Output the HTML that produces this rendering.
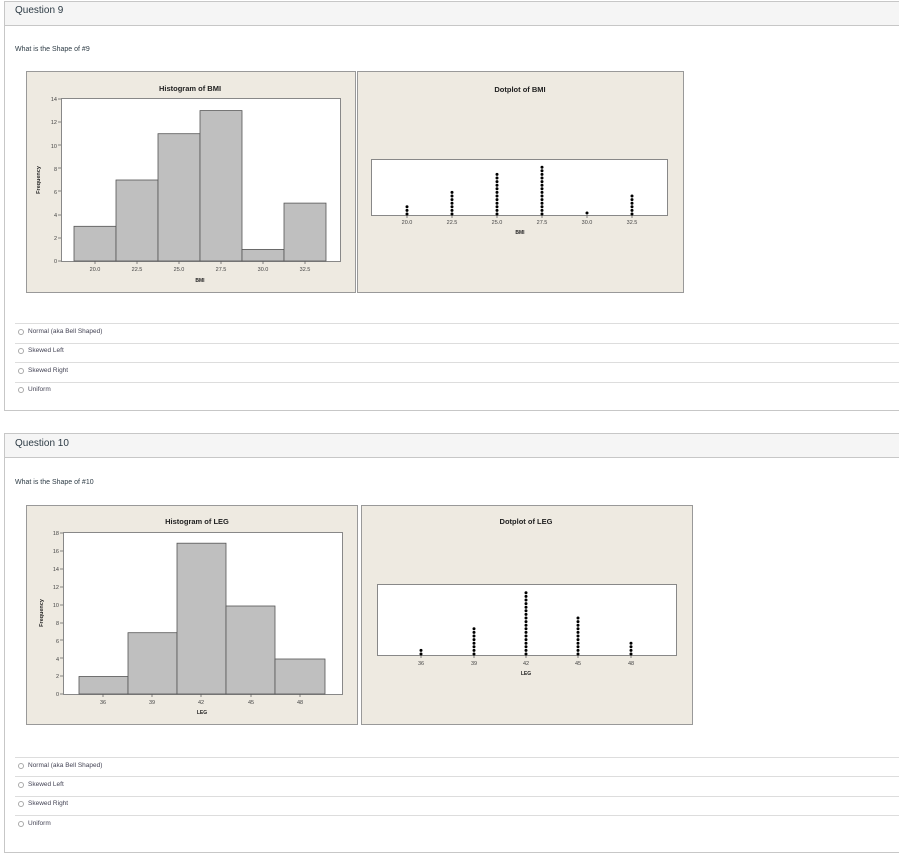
<!DOCTYPE html>
<html><head><meta charset="utf-8"><style>
body{margin:0;width:899px;height:842px;background:#fff;font-family:"Liberation Sans",sans-serif;position:relative;overflow:hidden}
.box{position:absolute;left:4px;width:900px;border:1px solid #c7c7c7;box-sizing:border-box}
.hd{position:absolute;left:0;right:0;top:0;height:23px;background:#f5f5f5;border-bottom:1px solid #c7c7c7}
.t{position:absolute;font-size:9px;color:#2d3b45;white-space:nowrap}
.q{font-size:10px;color:#2d3b45}
.l{position:absolute;left:15px;width:890px;height:1px;background:#ddd}
.r{position:absolute;width:6px;height:6px;border:1px solid #aaa;border-radius:50%;box-sizing:border-box}
.o{position:absolute;font-size:6.5px;color:#445}
</style></head><body>
<div class="box" style="top:1px;height:410px"><div class="hd"></div></div>
<div class="box" style="top:433px;height:420px"><div class="hd"></div></div>
<div class="t q" style="left:15px;top:5px">Question 9</div>
<div class="t" style="left:15px;top:46px;font-size:7px">What is the Shape of #9</div>
<div class="t q" style="left:15px;top:438px">Question 10</div>
<div class="t" style="left:15px;top:479px;font-size:7px">What is the Shape of #10</div>

<div class="l" style="top:323px"></div><div class="l" style="top:343px"></div><div class="l" style="top:362px"></div><div class="l" style="top:382px"></div>
<div class="r" style="left:18px;top:329px"></div><div class="o" style="left:28px;top:328px">Normal (aka Bell Shaped)</div>
<div class="r" style="left:18px;top:348px"></div><div class="o" style="left:28px;top:347px">Skewed Left</div>
<div class="r" style="left:18px;top:368px"></div><div class="o" style="left:28px;top:367px">Skewed Right</div>
<div class="r" style="left:18px;top:387px"></div><div class="o" style="left:28px;top:386px">Uniform</div>

<div class="l" style="top:757px"></div><div class="l" style="top:776px"></div><div class="l" style="top:796px"></div><div class="l" style="top:815px"></div>
<div class="r" style="left:18px;top:763px"></div><div class="o" style="left:28px;top:762px">Normal (aka Bell Shaped)</div>
<div class="r" style="left:18px;top:782px"></div><div class="o" style="left:28px;top:781px">Skewed Left</div>
<div class="r" style="left:18px;top:801px"></div><div class="o" style="left:28px;top:800px">Skewed Right</div>
<div class="r" style="left:18px;top:821px"></div><div class="o" style="left:28px;top:820px">Uniform</div>

<svg style="position:absolute;left:0;top:0" width="899" height="842" font-family="Liberation Sans, sans-serif">
<g stroke="#999" fill="#eeeae1">
<rect x="26.5" y="71.5" width="329" height="221"/>
<rect x="357.5" y="71.5" width="326" height="221"/>
<rect x="26.5" y="505.5" width="331" height="219"/>
<rect x="361.5" y="505.5" width="331" height="219"/>
</g>
<g stroke="#888" fill="#fff">
<rect x="61.5" y="98.5" width="279" height="163"/>
<rect x="371.5" y="159.5" width="296" height="56"/>
<rect x="63.5" y="532.5" width="279" height="162"/>
<rect x="377.5" y="584.5" width="299" height="71"/>
</g>
<g stroke="#666" stroke-width="0.8">
<path d="M58 99h3M58 122h3M58 145h3M58 168h3M58 191h3M58 215h3M58 238h3M58 261h3M95 261v3M137 261v3M179 261v3M221 261v3M263 261v3M305 261v3M407 215v3M452 215v3M497 215v3M542 215v3M587 215v3M632 215v3"/>
<path d="M60 533h3M60 551h3M60 569h3M60 587h3M60 605h3M60 623h3M60 640h3M60 658h3M60 676h3M60 694h3M103 694v3M152 694v3M201 694v3M251 694v3M300 694v3M421 655v3M474 655v3M526 655v3M578 655v3M631 655v3"/>
</g>
<g font-weight="bold" font-size="7.5" fill="#222" text-anchor="middle">
<text x="190" y="91">Histogram of BMI</text>
<text x="520" y="92">Dotplot of BMI</text>
<text x="197" y="524">Histogram of LEG</text>
<text x="526" y="524">Dotplot of LEG</text>
<text x="200" y="282" font-size="5">BMI</text>
<text x="520" y="234" font-size="5">BMI</text>
<text x="202" y="714" font-size="5">LEG</text>
<text x="526" y="675" font-size="5">LEG</text>
<text transform="translate(40,180) rotate(-90)" font-size="5.5">Frequency</text>
<text transform="translate(43,613) rotate(-90)" font-size="5.5">Frequency</text>
</g>
<g fill="#bfbfbf" stroke="#555" stroke-width="0.8">
<rect x="74" y="226.3" width="42" height="34.7"/>
<rect x="116" y="180" width="42" height="81"/>
<rect x="158" y="133.7" width="42" height="127.3"/>
<rect x="200" y="110.6" width="42" height="150.4"/>
<rect x="242" y="249.4" width="42" height="11.6"/>
<rect x="284" y="203.1" width="42" height="57.9"/>
<rect x="79" y="676.5" width="49" height="17.5"/>
<rect x="128" y="632.7" width="49" height="61.3"/>
<rect x="177" y="543.2" width="49" height="150.8"/>
<rect x="226" y="606" width="49" height="88"/>
<rect x="275" y="659" width="50" height="35"/>
</g>
<g font-size="5.5" fill="#444" text-anchor="end">
<text x="57" y="101">14</text><text x="57" y="124">12</text><text x="57" y="148">10</text><text x="57" y="171">8</text><text x="57" y="194">6</text><text x="57" y="217">4</text><text x="57" y="240">2</text><text x="57" y="263">0</text>
<text x="59" y="535">18</text><text x="59" y="553">16</text><text x="59" y="571">14</text><text x="59" y="589">12</text><text x="59" y="607">10</text><text x="59" y="625">8</text><text x="59" y="643">6</text><text x="59" y="661">4</text><text x="59" y="678">2</text><text x="59" y="696">0</text>
</g>
<g font-size="5.5" fill="#444" text-anchor="middle">
<text x="95" y="271">20.0</text><text x="137" y="271">22.5</text><text x="179" y="271">25.0</text><text x="221" y="271">27.5</text><text x="263" y="271">30.0</text><text x="305" y="271">32.5</text>
<text x="407" y="224">20.0</text><text x="452" y="224">22.5</text><text x="497" y="224">25.0</text><text x="542" y="224">27.5</text><text x="587" y="224">30.0</text><text x="632" y="224">32.5</text>
<text x="103" y="704">36</text><text x="152" y="704">39</text><text x="201" y="704">42</text><text x="251" y="704">45</text><text x="300" y="704">48</text>
<text x="421" y="665">36</text><text x="474" y="665">39</text><text x="526" y="665">42</text><text x="578" y="665">45</text><text x="631" y="665">48</text>
</g>
<g stroke="#000" stroke-width="3" stroke-linecap="round" stroke-dasharray="0 3.6">
<line x1="407" y1="214" x2="407" y2="204"/>
<line x1="452" y1="214" x2="452" y2="189"/>
<line x1="497" y1="214" x2="497" y2="174"/>
<line x1="542" y1="214" x2="542" y2="166"/>
<line x1="587" y1="213" x2="587" y2="212"/>
<line x1="632" y1="214" x2="632" y2="196"/>
<line x1="421" y1="654" x2="421" y2="648"/>
<line x1="474" y1="654" x2="474" y2="628"/>
<line x1="526" y1="654" x2="526" y2="590"/>
<line x1="578" y1="654" x2="578" y2="617"/>
<line x1="631" y1="654" x2="631" y2="640"/>
</g>
</svg>
</body></html>
